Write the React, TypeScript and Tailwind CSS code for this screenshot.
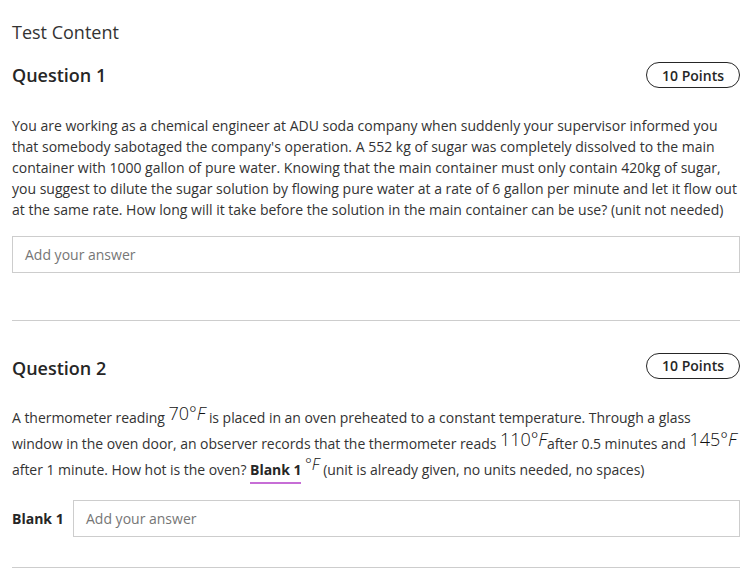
const Points = () => (
  <span className="h-[26px] px-[15px] flex items-center rounded-full border border-[#262626] text-[14px] font-semibold text-[#262626]">
    10 Points
  </span>
);

const Math = ({ children }: { children: React.ReactNode }) => (
  <span className="font-['Open_Sans',sans-serif] font-light text-[18px] text-[#111] align-[3px] leading-none">
    {children}
  </span>
);

const F = () => <span className="italic">F</span>;

export default function App() {
  return (
    <div className="min-h-screen bg-white pl-3 pr-[11px] pt-5 font-['Open_Sans',sans-serif] text-[#333]">
      <h1 className="text-[18px] leading-6 text-[#333]">Test Content</h1>

      <div className="mt-[18px] flex items-center justify-between">
        <h2 className="text-[18px] font-semibold leading-6 text-[#262626]">Question 1</h2>
        <Points />
      </div>
      <p className="mt-[27px] text-[14px] leading-[21px]">
        You are working as a chemical engineer at ADU soda company when suddenly your supervisor informed you
        that somebody sabotaged the company's operation. A 552 kg of sugar was completely dissolved to the main
        container with 1000 gallon of pure water. Knowing that the main container must only contain 420kg of sugar,
        you suggest to dilute the sugar solution by flowing pure water at a rate of 6 gallon per minute and let it flow out
        at the same rate. How long will it take before the solution in the main container can be use? (unit not needed)
      </p>
      <div className="mt-4 h-[37px] flex items-center border border-[#cdcdcd] px-3 text-[14px] text-[#767676]">
        Add your answer
      </div>
      <div className="mt-[47px] border-t border-[#cdcdcd]" />

      <div className="mt-[30px] flex items-center justify-between">
        <h2 className="mt-[5px] text-[18px] font-semibold leading-6 text-[#262626]">Question 2</h2>
        <Points />
      </div>
      <p className="mt-[24px] text-[14px] leading-[25px] tracking-[-0.04px]">
        <span className="whitespace-nowrap">
          A thermometer reading <Math>70°<F /></Math> is placed in an oven preheated to a constant temperature. Through a glass
        </span>
        <br />
        <span className="whitespace-nowrap">
          window in the oven door, an observer records that the thermometer reads <Math>110°<F /></Math>after 0.5 minutes and{" "}
          <Math>145°<F /></Math>
        </span>
        <br />
        after 1 minute. How hot is the oven?{" "}
        <span className="font-bold text-[#262626] border-b-2 border-[#c76ed6] pb-[3px]">Blank 1</span>{" "}
        <span className="font-['Open_Sans',sans-serif] font-light text-[16px] text-[#111] align-[5px] leading-none">
          °<F />
        </span>{" "}
        (unit is already given, no units needed, no spaces)
      </p>
      <div className="mt-[18px] flex items-center">
        <span className="w-[61px] text-[14px] font-bold text-[#262626]">Blank 1</span>
        <div className="flex-1 h-[37px] flex items-center border border-[#cdcdcd] px-3 text-[14px] text-[#767676]">
          Add your answer
        </div>
      </div>
      <div className="mt-[30px] border-t border-[#cdcdcd]" />
    </div>
  );
}
